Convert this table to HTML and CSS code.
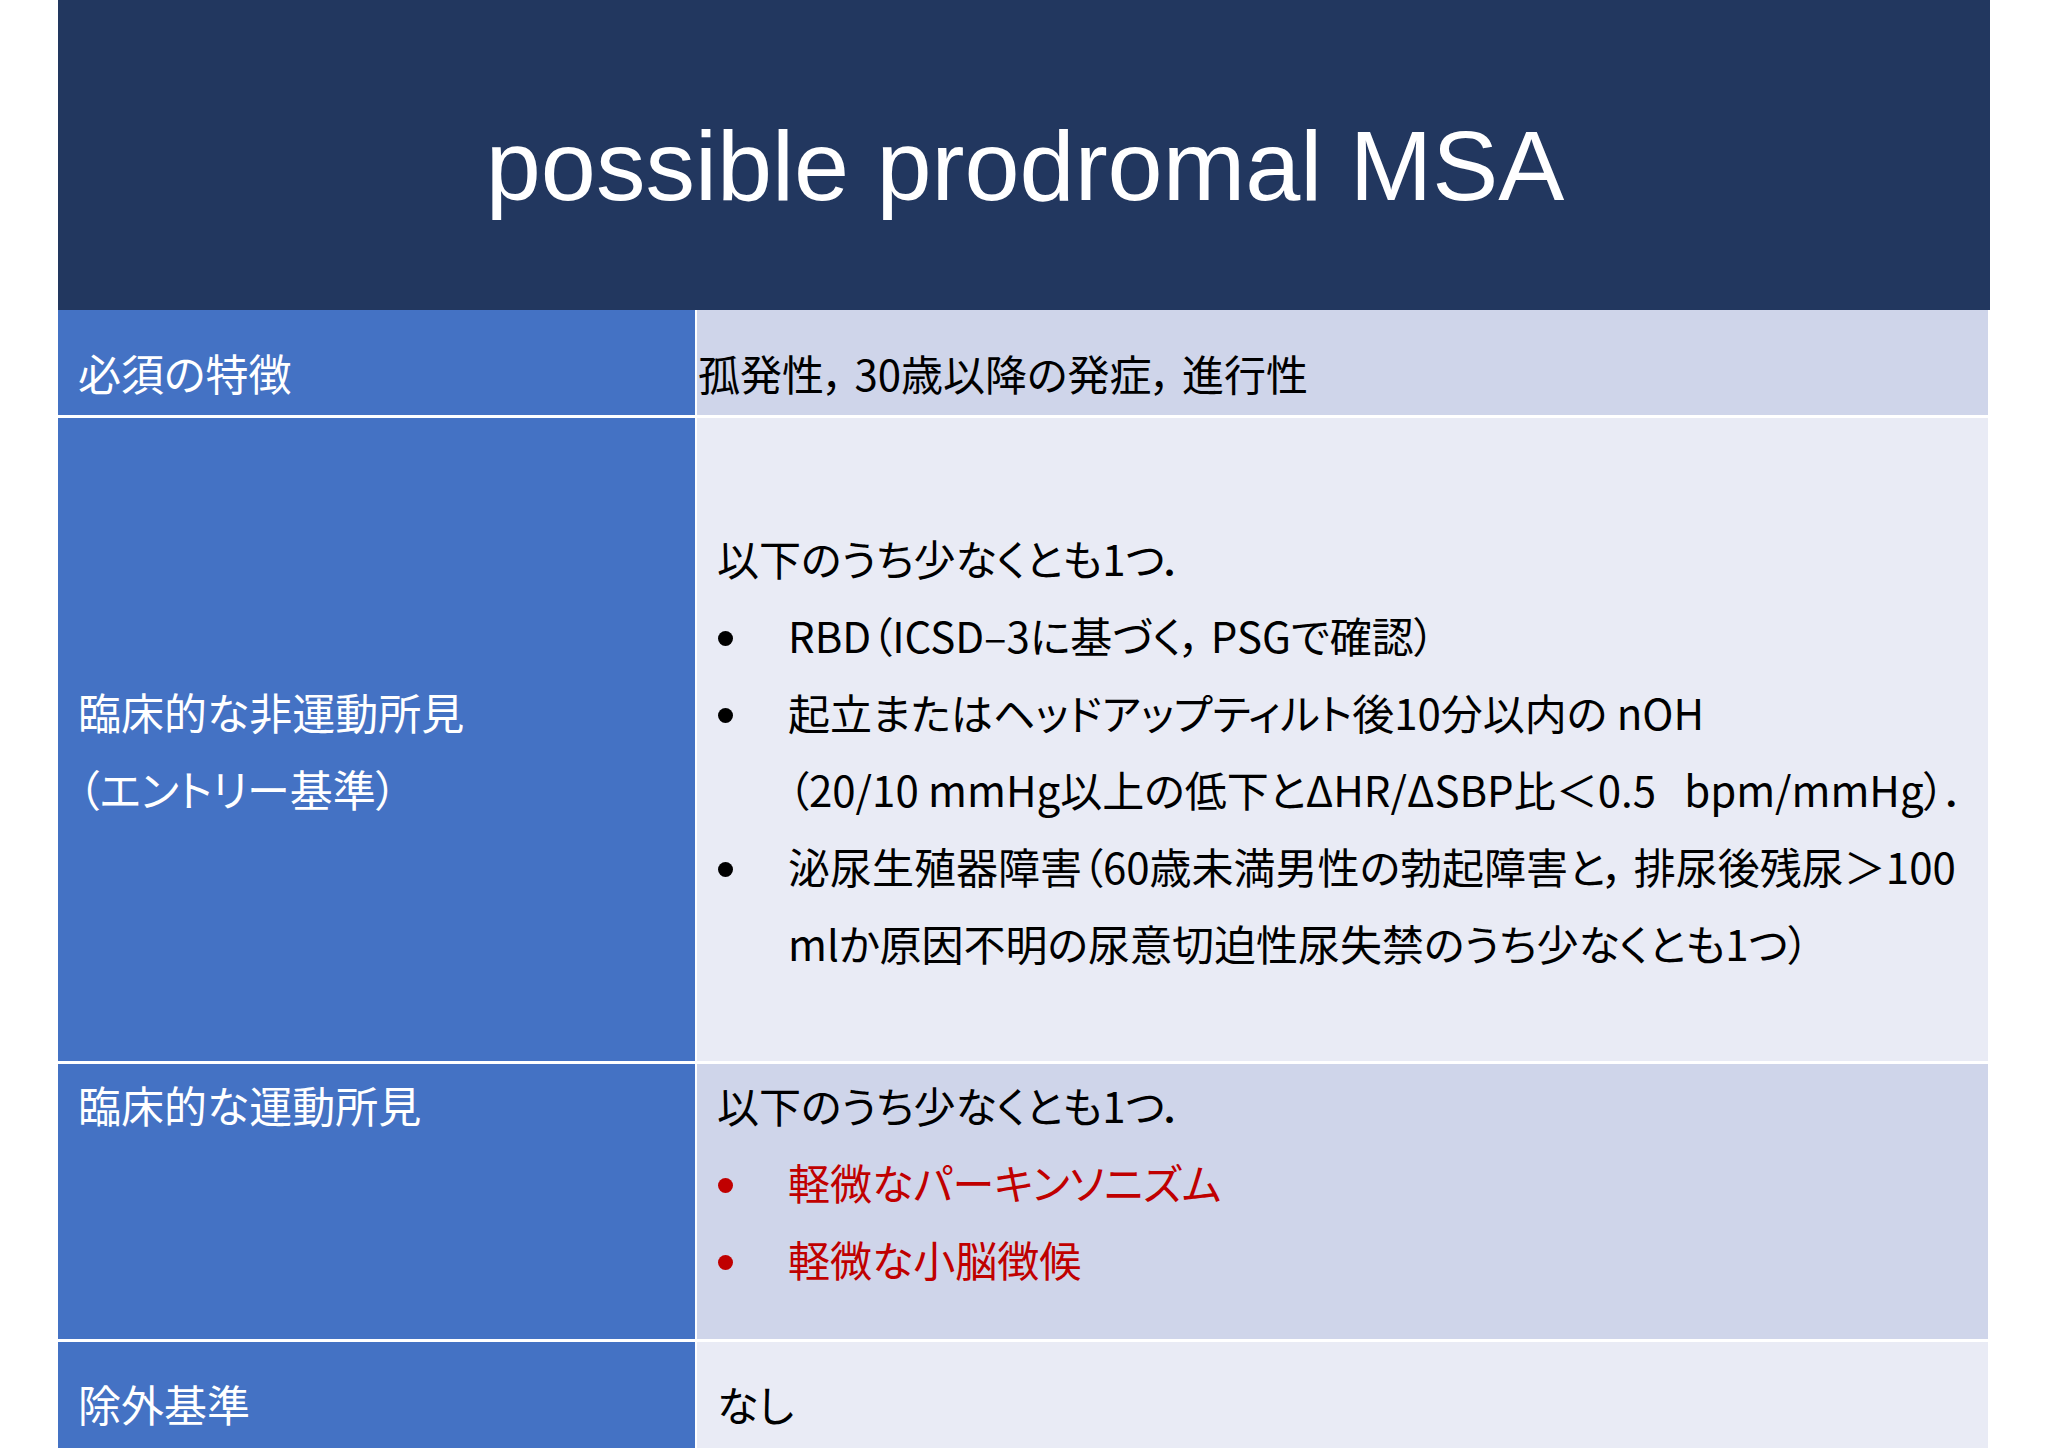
FILE: index.html
```html
<!DOCTYPE html>
<html lang="ja">
<head>
<meta charset="utf-8">
<title>possible prodromal MSA</title>
<link rel="stylesheet" href="styles.css">
</head>
<body>
<div class="slide">
  <header class="title-bar">
    <h1 class="title">possible prodromal MSA</h1>
  </header>
  <div class="table">
    <div class="cell label r1">必須の特徴</div>
    <div class="cell body r1 tint-a first">孤発性， 30歳以降の発症， 進行性</div>

    <div class="cell label r2">
      <div class="ln">臨床的な非運動所見</div>
      <div class="ln">（エントリー基準）</div>
    </div>
    <div class="cell body r2 tint-b">
      <div class="ln">以下のうち少なくとも1つ．</div>
      <div class="li">
        <span class="mk"><span class="dot"></span></span>
        <div class="lt">RBD（ICSD–3に基づく， PSGで確認）</div>
      </div>
      <div class="li">
        <span class="mk"><span class="dot"></span></span>
        <div class="lt">起立またはヘッドアップティルト後10分以内の nOH<br>（20/10 mmHg以上の低下とΔHR/ΔSBP比＜0.5&nbsp;&nbsp;&nbsp;bpm/mmHg）．</div>
      </div>
      <div class="li">
        <span class="mk"><span class="dot"></span></span>
        <div class="lt">泌尿生殖器障害（60歳未満男性の勃起障害と， 排尿後残尿＞100<br>mlか原因不明の尿意切迫性尿失禁のうち少なくとも1つ）</div>
      </div>
    </div>

    <div class="cell label r3">臨床的な運動所見</div>
    <div class="cell body r3 tint-a">
      <div class="ln">以下のうち少なくとも1つ．</div>
      <div class="li red">
        <span class="mk"><span class="dot"></span></span>
        <div class="lt">軽微なパーキンソニズム</div>
      </div>
      <div class="li red">
        <span class="mk"><span class="dot"></span></span>
        <div class="lt">軽微な小脳徴候</div>
      </div>
    </div>

    <div class="cell label r4">除外基準</div>
    <div class="cell body r4 tint-b">なし</div>
  </div>
</div>
</body>
</html>
```

FILE: styles.css
```css
html, body {
  margin: 0;
  padding: 0;
  background: #ffffff;
}

body {
  width: 2048px;
  height: 1448px;
  overflow: hidden;
}

.slide {
  margin-left: 58px;
  width: 1932px;
}

.title-bar {
  height: 310px;
  background: #22375f;
  box-sizing: border-box;
  padding-top: 109px;
  display: flex;
  justify-content: center;
  align-items: flex-start;
}

.title {
  margin: 0;
  font-family: "Liberation Sans", Arial, sans-serif;
  font-weight: normal;
  font-size: 99px;
  line-height: normal;
  color: #ffffff;
  padding-left: 2px;
}

.table {
  width: 1930px;
  display: grid;
  grid-template-columns: 637px 1291px;
  grid-template-rows: 105px 643px 275px 106px;
  column-gap: 2px;
  row-gap: 3px;
  background: #ffffff;
  font-family: "Noto Sans CJK JP", "Noto Sans", sans-serif;
  font-size: 42px;
  line-height: 77px;
  font-feature-settings: "palt";
  color: #000000;
}

.cell {
  box-sizing: border-box;
  white-space: nowrap;
}

.label {
  background: #4472c4;
  color: #ffffff;
  padding-left: 20px;
  font-size: 43px;
}

.body {
  padding-left: 20px;
}

.body.first {
  padding-left: 1px;
}

.tint-a {
  background: #cfd5ea;
}

.tint-b {
  background: #e9ebf5;
}

.r1 {
  padding-top: 24px;
}

.r2 {
  display: flex;
  flex-direction: column;
  justify-content: center;
  padding-top: 20px;
}

.r3 {
  padding-top: 2px;
}

.r4 {
  padding-top: 23px;
}

.li {
  display: flex;
  align-items: flex-start;
}

.mk {
  flex: 0 0 71px;
  height: 77px;
}

.dot {
  display: block;
  width: 15px;
  height: 15px;
  border-radius: 50%;
  background: #000000;
  margin-top: 35px;
  margin-left: 1px;
}

.red {
  color: #c00000;
}

.red .dot {
  background: #c00000;
}
```
